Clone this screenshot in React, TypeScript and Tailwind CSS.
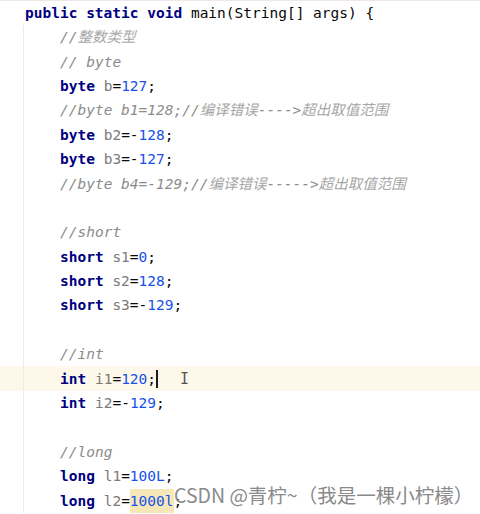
import React from 'react'

type Tok = [string, string]

const kw = 'font-bold text-[#000080]'
const vr = 'text-[#7a7a7a]'
const nm = 'text-[#1750eb]'
const tx = 'text-[#080808]'
const cm = 'italic text-[#8c8c8c]'
const cn = 'italic text-[#a6a6a6]'

const lines: { toks: Tok[]; current?: boolean }[] = [
  { toks: [[cm, '//'], [cn, '整数类型']] },
  { toks: [[cm, '// byte']] },
  { toks: [[kw, 'byte'], [tx, ' '], [vr, 'b'], [tx, '='], [nm, '127'], [tx, ';']] },
  { toks: [[cm, '//byte b1=128;//'], [cn, '编译错误'], [cm, '---->'], [cn, '超出取值范围']] },
  { toks: [[kw, 'byte'], [tx, ' '], [vr, 'b2'], [tx, '=-'], [nm, '128'], [tx, ';']] },
  { toks: [[kw, 'byte'], [tx, ' '], [vr, 'b3'], [tx, '=-'], [nm, '127'], [tx, ';']] },
  { toks: [[cm, '//byte b4=-129;//'], [cn, '编译错误'], [cm, '----->'], [cn, '超出取值范围']] },
  { toks: [] },
  { toks: [[cm, '//short']] },
  { toks: [[kw, 'short'], [tx, ' '], [vr, 's1'], [tx, '='], [nm, '0'], [tx, ';']] },
  { toks: [[kw, 'short'], [tx, ' '], [vr, 's2'], [tx, '='], [nm, '128'], [tx, ';']] },
  { toks: [[kw, 'short'], [tx, ' '], [vr, 's3'], [tx, '=-'], [nm, '129'], [tx, ';']] },
  { toks: [] },
  { toks: [[cm, '//int']] },
  { toks: [[kw, 'int'], [tx, ' '], [vr, 'i1'], [tx, '='], [nm, '120'], [tx, ';']], current: true },
  { toks: [[kw, 'int'], [tx, ' '], [vr, 'i2'], [tx, '=-'], [nm, '129'], [tx, ';']] },
  { toks: [] },
  { toks: [[cm, '//long']] },
  { toks: [[kw, 'long'], [tx, ' '], [vr, 'l1'], [tx, '='], [nm, '100L'], [tx, ';']] },
  { toks: [[kw, 'long'], [tx, ' '], [vr, 'l2'], [tx, '='], [nm + ' bg-[#f6e7b9]', '1000l'], [tx, ';']] },
]

export default function App() {
  return (
    <div
      className="relative w-[480px] h-[514px] overflow-hidden bg-white text-[14.5px] whitespace-pre border-t border-[#f0e6e6]"
      style={{ fontFamily: '"DejaVu Sans Mono", "Noto Sans CJK SC", monospace' }}
    >
      <div className="h-[24px] leading-[24px] pl-[25px]">
        <span className={kw}>public</span>
        <span className={tx}> </span>
        <span className={kw}>static</span>
        <span className={tx}> </span>
        <span className={kw}>void</span>
        <span className={tx}> main(String[] args) {'{'}</span>
      </div>
      {lines.map((l, i) => (
        <div
          key={i}
          className={'flex h-[24.4px] pl-[23px] ' + (l.current ? 'bg-[#fdf8e9]' : '')}
        >
          <div className="flex items-center h-full border-l border-[#ececec] pl-[36px] leading-[24px]">
            {l.toks.map((t, j) => (
              <span key={j} className={t[0]}>{t[1]}</span>
            ))}
            {l.current && (
              <>
                <span className="inline-block w-[2px] h-[18px] bg-[#1a1a1a]" />
                <span className="ml-[22px] text-[#555] text-[15px] font-light">I</span>
              </>
            )}
          </div>
        </div>
      ))}
      {/* watermark over the last line */}
      <div
        className="absolute left-[174px] top-[480px] text-[19.5px] leading-[28px] text-[#8a8a8a]"
        style={{ fontFamily: '"Noto Sans CJK SC", sans-serif' }}
      >
        CSDN @青柠~（我是一棵小柠檬）
      </div>
    </div>
  )
}
